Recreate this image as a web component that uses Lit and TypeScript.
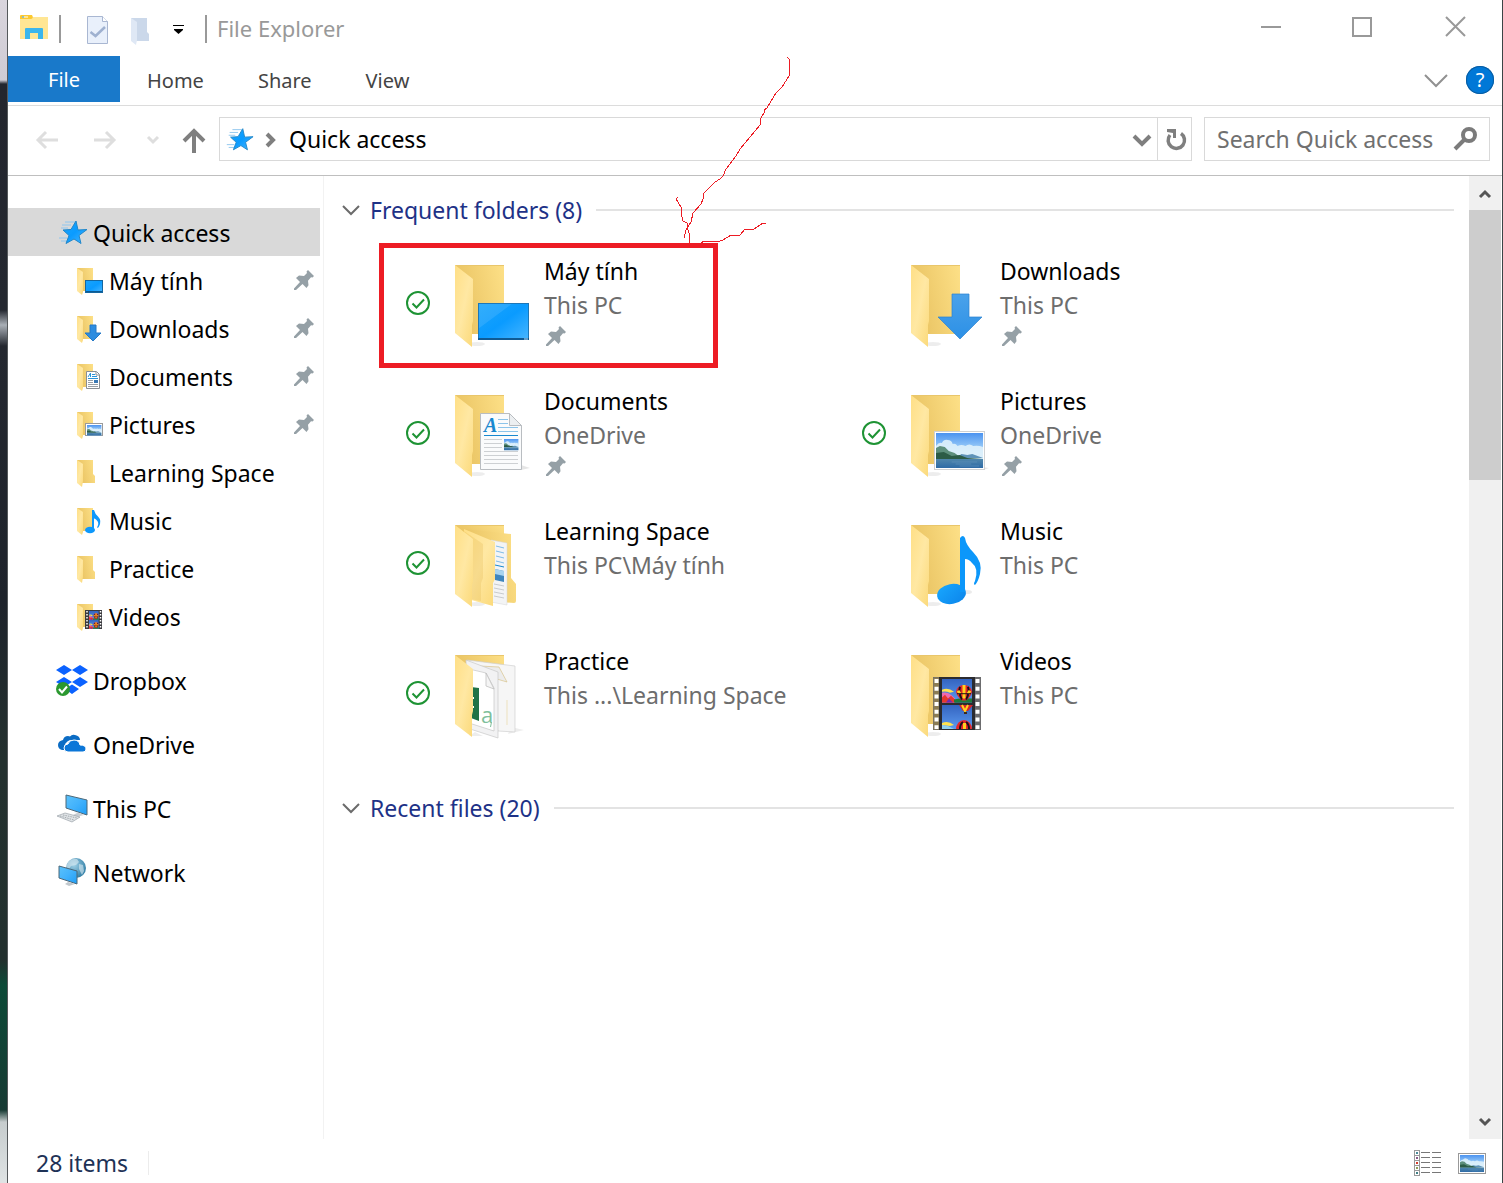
import { LitElement, html, svg, css, nothing, SVGTemplateResult } from "lit";
import { customElement, state } from "lit/decorators.js";
import { classMap } from "lit/directives/class-map.js";

interface Folder {
  name: string;
  place: string;
  art: string;
  pinned: boolean;
  synced: boolean;
  marked?: boolean;
}

interface Place {
  name: string;
  art: string;
  child?: boolean;
  pinned?: boolean;
}

const PLACES: Place[] = [
  { name: "Quick access", art: "star" },
  { name: "Máy tính", art: "desktop", child: true, pinned: true },
  { name: "Downloads", art: "downloads", child: true, pinned: true },
  { name: "Documents", art: "documents", child: true, pinned: true },
  { name: "Pictures", art: "pictures", child: true, pinned: true },
  { name: "Learning Space", art: "plain", child: true },
  { name: "Music", art: "music", child: true },
  { name: "Practice", art: "plain", child: true },
  { name: "Videos", art: "videos", child: true },
  { name: "Dropbox", art: "dropbox" },
  { name: "OneDrive", art: "onedrive" },
  { name: "This PC", art: "pc" },
  { name: "Network", art: "network" },
];

const FOLDERS: Folder[] = [
  { name: "Máy tính", place: "This PC", art: "desktop", pinned: true, synced: true, marked: true },
  { name: "Downloads", place: "This PC", art: "downloads", pinned: true, synced: false },
  { name: "Documents", place: "OneDrive", art: "documents", pinned: true, synced: true },
  { name: "Pictures", place: "OneDrive", art: "pictures", pinned: true, synced: true },
  { name: "Learning Space", place: "This PC\\Máy tính", art: "learning", pinned: false, synced: true },
  { name: "Music", place: "This PC", art: "music", pinned: false, synced: false },
  { name: "Practice", place: "This ...\\Learning Space", art: "practice", pinned: false, synced: true },
  { name: "Videos", place: "This PC", art: "videos", pinned: false, synced: false },
];

/* Landscape photo drawn in a 48 x 35 box. */
const landscape = svg`
  <rect width="48" height="35" fill="url(#sky)"/>
  <path d="M0 13q3-4 6-3q2-4 6-3q4 0 5 4q3-1 5 2q4-2 8 0q4-3 8 0q5-1 10 1v14H0z" fill="#dff1fb" opacity=".9"/>
  <path d="M20 25l6-4 6 1 5-1 11 4z" fill="#5f93b8"/>
  <path d="M0 15l4-2 5 1 4 4 6 2 7 5H0z" fill="#5d8f7c"/>
  <path d="M0 20l8-1 8 4 8-1 8 3 16 1H0z" fill="#2c5c46"/>
  <rect y="26" width="48" height="9" fill="url(#lake)"/>
  <path d="M16 29h26M20 31h16M24 33h20" stroke="#6d9fc6" stroke-width=".8" opacity=".6"/>`;

/* Balloon film frame drawn in a 30 x 24 box. */
const balloonFrame = svg`
  <rect width="30" height="24" fill="url(#film)"/>
  <path d="M0 11q6-3 12 2l-4 1q-4-2-8-1z" fill="#ffe34f"/>
  <path d="M0 14q5-1 9 2l4 4v4H0z" fill="#f06ab0"/>
  <path d="M0 19l3-3 3 4 3-3 4 4v3H0z" fill="#e5382d"/>
  <path d="M4 24l3-4 4 4z" fill="#6f2bb8"/>
  <path d="M12 21q8-2 18-1v4H12z" fill="#1f7a3a"/>
  <path d="M14 13a8 7 0 0 1 16 0q-1 5-6 9h-4q-5-4-6-9z" fill="#e5262a"/>
  <path d="M18 8q-2 6 2 13M26 8q2 6-2 13" stroke="#16121c" stroke-width="2" fill="none"/>
  <path d="M22 6v14M16 12l2 3M28 12l-2 3" stroke="#ffd21f" stroke-width="3"/>
  <path d="M15 15h14" stroke="#1d1417" stroke-width="1"/>`;

const star = svg`
  <path d="M9 6h10M6 9h9M5 12h7M3 22h8M5 25h7" stroke="#8fc6ee" stroke-width="1"/>
  <path d="M20 5l2 9 9-.5-8 6 2 8-7-4.500-8 4.500 3-8-6-5.500 8-.5z" fill="url(#blue)" stroke="#2187c9" stroke-width="1"/>`;

const smallBase = svg`
  <path d="M5 4h16v23H10z" fill="url(#back)"/>
  <path d="M5 4l6 4v20l-1 3-5-4z" fill="url(#flap)"/>`;

const SMALL: Record<string, SVGTemplateResult> = {
  star,
  plain: svg`
    <path d="M5 4h16v14l2 2v7H10z" fill="url(#back)"/>
    <path d="M5 4l6 4v17l-1 6-5-4z" fill="url(#flap)"/>`,
  desktop: svg`${smallBase}<rect x="13.500" y="16.500" width="17" height="12" fill="url(#blue)" stroke="#15669f"/><path d="M14 27.500h16" stroke="#0b5a93"/>`,
  downloads: svg`${smallBase}<path d="M18 13h6v8h5l-8 8-8-8h5z" fill="#2e8de0" stroke="#2579c6"/>`,
  documents: svg`${smallBase}<path d="M14.500 11.500h10l3 3v14h-13z" fill="#fff" stroke="#8a8f94"/><path d="M24 12v3h3" fill="none" stroke="#8a8f94"/>
    <path d="M16 18.500h10M20 14.500h3M20 16.500h5" stroke="#2a94d8"/><path d="M16 17l2.500-4v4" fill="none" stroke="#2a94d8"/><path d="M16 20.500h5M16 22.500h5M16 24.500h10M16 26.500h10" stroke="#9aa0a6"/><rect x="22" y="20" width="4" height="3" fill="#3878b4"/>`,
  pictures: svg`${smallBase}<rect x="13.500" y="15.500" width="17" height="12" fill="#fff" stroke="#9a9a9a"/><g transform="translate(15 17) scale(.3)">${landscape}</g>`,
  music: svg`${smallBase}<ellipse cx="18" cy="26" rx="5" ry="3.200" fill="#0d98fb"/><path d="M20 26V6h2q1 4 4 6.500q4 4 1 10q-1 2-2 1q3-5-1-8-1-1-2-1v11z" fill="#0d98fb"/>`,
  videos: svg`${smallBase}<rect x="13" y="10" width="17" height="19" fill="#3a3a3e"/><g transform="translate(17 11) scale(.32 .36)">${balloonFrame}</g><g transform="translate(17 20) scale(.32 .36)">${balloonFrame}</g>
    <path d="M15 11v18M28.500 11v18" stroke="#fff" stroke-width="1.500" stroke-dasharray="1.500 1.500"/>`,
  dropbox: svg`
    <path d="M8 1l8 5-8 5-8-5zM24 1l8 5-8 5-8-5zM8 13l8 5-8 5-8-5zM24 13l8 5-8 5-8-5zM16 20.500l7 4.500-7 5-7-5z" fill="#0b62ff"/>
    <circle cx="7" cy="25" r="7" fill="#2b982f"/><path d="M3 25l3 3.500 5-6" fill="none" stroke="#fff" stroke-width="2"/>`,
  onedrive: svg`
    <path d="M6 22q-4-1-4-5t5-5q1-4 5-4 1 0 2 .5 2-2.500 5-1.500 5 1 5 5H14q-6 2-6 10z" fill="#0b6cc4"/>
    <path d="M12 24q-4 0-4-4t4-4q1-4 6-4 5 0 6 5 6 0 6 4 0 3-3 3z" fill="#0b76d8" stroke="#fff" stroke-width="1"/>`,
  pc: svg`
    <path d="M10 3l21 5v15L10 16z" fill="url(#screen)" stroke="#4d6879" stroke-width="1"/>
    <path d="M17 20l4 1-4 2 3 2 8-2-5-2z" fill="#c9ced3"/>
    <path d="M1 24l8-3 15 4-8 5z" fill="#dfe3e6" stroke="#9ca4aa" stroke-width=".7"/><path d="M4 24l14 4M7 23l14 3" stroke="#a4abb0" stroke-dasharray="1.500 1"/>`,
  network: svg`
    <circle cx="20" cy="12" r="10" fill="url(#globe)"/>
    <path d="M12 6q4-4 9-3l2 3-3 3-5 1-2 3-3-2zM23 8l4 1 1 6-2 4-3-6z" fill="#dcebf2" opacity=".6"/>
    <path d="M3 10l18 5v13L3 22z" fill="url(#screen)" stroke="#4d6879" stroke-width="1"/><path d="M9 28l3-2 7 2-6 2z" fill="#c0c7cc"/>`,
};

const bigBase = svg`
  <ellipse cx="22" cy="79" rx="8" ry="2" fill="#000" opacity=".07"/>
  <path d="M0 0h49v69H10z" fill="url(#back)"/><path d="M0 .5h49" stroke="#e9c66b"/>
  <path d="M0 0l18 14v42l-1 4v22L0 68z" fill="url(#flap)"/>`;

const BIG: Record<string, SVGTemplateResult> = {
  desktop: svg`${bigBase}
    <rect x="23" y="38" width="51" height="37" fill="url(#blue)"/><path d="M23 75V64l35-26H23z" fill="#fff" opacity=".1"/>
    <rect x="23.500" y="38.500" width="50" height="36" fill="none" stroke="#1d77b8"/><path d="M23 74h51" stroke="#0f5a94" stroke-width="2"/><path d="M69 74h4" stroke="#bfe2fa"/>`,
  downloads: svg`${bigBase}<path d="M41 29h17v23h13L49 74 27 52h14z" fill="url(#arrow)" stroke="#2c82cf" stroke-width=".7"/>`,
  documents: svg`${bigBase}
    <path d="M66 70l9 3-9 2z" fill="#000" opacity=".1"/>
    <path d="M25.500 18.500h29l12 12v44h-41z" fill="#fafbfc" stroke="#b9bdc1"/><path d="M54.500 18.500v12h12z" fill="#eceff1" stroke="#b9bdc1"/>
    <text x="29" y="37" class="letter-a">A</text>
    <path d="M43 24.500h10M43 28.500h10M43 32.500h20M43 36.500h20" stroke="#8cc4ea"/><path d="M29 40.500h34" stroke="#1888cf"/>
    <path d="M29 44.500h18M29 48.500h18M29 52.500h18M29 56.500h34M29 60.500h34M29 64.500h34M29 68.500h34" stroke="#cdd0d3"/>
    <g transform="translate(49 44) scale(.3 .32)">${landscape}</g>`,
  pictures: svg`${bigBase}
    <path d="M70 72l8 1-6 2z" fill="#000" opacity=".1"/>
    <rect x="23.500" y="36.500" width="50" height="38" fill="#fff" stroke="#cfd1d3"/><g transform="translate(25 38) scale(.98 1)">${landscape}</g>`,
  learning: svg`
    <ellipse cx="22" cy="79" rx="8" ry="2" fill="#000" opacity=".07"/>
    <path d="M0 0h49v12H6z" fill="url(#back)"/><path d="M0 .5h49" stroke="#e9c66b"/>
    <path d="M10 4l46 5v44l5 6v17q0 2-2 2l-12-1z" fill="url(#back)"/>
    <path d="M36 15l16 3v62l-16-3z" fill="#f3f4f5" stroke="#d4d4d4" stroke-width=".5"/>
    <path d="M41 21l8 2M41 26l8 2M41 31l8 2M41 36l8 2" stroke="#7fbce8"/><path d="M40 40l9 2" stroke="#1888cf"/>
    <path d="M40 44l9 2v11l-9-2z" fill="#3f86bd"/><path d="M40 44l9 2v5l-9-2z" fill="#a8d4f0"/><path d="M39 59l10 2M39 63l10 2M39 67l10 2M39 71l10 2" stroke="#c8cbce"/>
    <path d="M9 4l31 13v37l-2 4v23L9 73z" fill="url(#flap)"/><path d="M9 6l19 13v34l-2 5v18L9 73z" fill="#d9ac42" opacity=".22"/>
    <path d="M0 0l18 14v42l-1 4v22L0 69z" fill="url(#flap)"/>`,
  music: svg`${bigBase}
    <ellipse cx="56" cy="67" rx="5" ry="2" fill="#000" opacity=".08"/>
    <ellipse cx="40.500" cy="69" rx="14.500" ry="10" transform="rotate(-10 40.500 69)" fill="url(#note)"/>
    <path d="M49 67V13q3-4 5 0 1 7 8 14 10 10 7 22-2 8-5 11-2-1 0-4 4-13-3-18-3-4-7-4v33z" fill="#0c97fa"/>`,
  practice: svg`
    <path d="M0 0h49v20H10z" fill="url(#back)"/><path d="M0 .5h49" stroke="#e9c66b"/>
    <path d="M56 72l13 3-16 4zM20 77l-6 4h14z" fill="#000" opacity=".07"/>
    <path d="M12 5l48 6v66l-17-1z" fill="#f6f6f6" stroke="#d0d0d0" stroke-width=".7"/>
    <path d="M24 11l20 1 8 15-10-3" fill="#ececec" stroke="#d8c48d" stroke-width=".7"/><path d="M52 45v25" stroke="#ead9a8" stroke-width=".7"/>
    <path d="M11 5l32 12v66L12 73z" fill="#f2f2f3" stroke="#c9c9c9" stroke-width=".7"/>
    <path d="M14 14l17 4 8 15v43L14 68z" fill="#fff" stroke="#c6c6c6" stroke-width=".7"/><path d="M31 18v13l8 3z" fill="#f5f5f5" stroke="#b9b9b9" stroke-width=".7"/>
    <path d="M16 32l8 1v33l-8-3z" fill="#1f7246"/><path d="M16 43h3M16 52h3" stroke="#fff" stroke-width="2"/>
    <text x="26" y="68" class="letter-small">a</text><path d="M36.500 67l-1 5" stroke="#7fbf9c"/>
    <path d="M0 0l18 14v42l-1 4v22L0 69z" fill="url(#flap)"/>`,
  videos: svg`${bigBase}
    <rect x="22" y="22" width="48" height="53" fill="#6c6c6e"/><rect x="22.500" y="22.500" width="6" height="52" fill="#8b7c55"/><rect x="28" y="22" width="36" height="53" fill="#2b2b2f"/>
    <g transform="translate(31 24) scale(1 .98)">${balloonFrame}</g>
    <rect x="31" y="50" width="30" height="24" fill="url(#film)"/><path d="M48 50h14l-5 6h-5z" fill="#d9262a"/><path d="M51 50l3 6 3-6" stroke="#ffd21f" stroke-width="2" fill="none"/><rect x="53" y="57" width="3" height="2" fill="#3c2a1c"/>
    <path d="M31 68q6-3 12 2l-4 1-8-1z" fill="#ffe34f"/><path d="M31 70l6 1 6 3H31z" fill="#8fd0ef"/>
    <path d="M45 74a8 9 0 0 1 16 0z" fill="#e5262a"/><path d="M49 74q0-5 3-7M58 74q0-5-3-7" stroke="#17121c" stroke-width="2" fill="none"/><path d="M53.500 74v-6" stroke="#ffd21f" stroke-width="3"/>
    <path d="M25.500 24v50M66.500 24v50" stroke="#fff" stroke-width="4" stroke-dasharray="4 3.700"/>`,
};

const pin = html`<svg class="pin" viewBox="0 0 20 20" aria-hidden="true">
  <path d="M14 0l6 6-1.500 1.500-1.500-.2-3 3.500.5 4.500-2 2.700-4-4-6.500 6H0v-1.500l6-6.500-4-4L5 5.500l5 .5 3-3-.5-1.500z" fill="#95a0a6"/></svg>`;

@customElement("app-root")
export class AppRoot extends LitElement {
  @state() private selected = "Quick access";

  static styles = css`
    :host {
      display: grid;
      grid-template-columns: 8px minmax(0, 1fr) 1px;
      min-height: 100vh;
      background: #3b4446;
      color: #000;
      font: 23px/32px "Noto Sans", "Open Sans", sans-serif;
    }
    * { box-sizing: border-box; }
    button, input { font: inherit; color: inherit; border: 0; padding: 0; margin: 0; background: none; }
    button { display: flex; align-items: center; justify-content: center; }
    h2, p { margin: 0; font: inherit; }
    svg { display: block; flex: none; overflow: visible; }
    .defs { position: absolute; width: 0; height: 0; }
    .backdrop {
      border-right: 1px solid #55595b;
      background: linear-gradient(#d9d5dd 0, #cfccd4 80px, #23262e 84px, #242830 310px, #a9afb6 325px, #242830 346px,
        #1e232b 600px, #24312f 760px, #22302e 960px, #0c4a37 985px, #173a33 1110px, #c6cccd 1122px, #dfe3e4 1183px);
    }
    .window { display: flex; flex-direction: column; min-width: 0; background: #fff; }
    .titlebar { display: flex; align-items: center; height: 56px; padding-left: 12px; color: #999; }
    .quick { display: flex; align-items: center; flex: 1; }
    .rule { width: 2px; height: 28px; background: #999; margin: 2px 0 0 11px; }
    .check { margin: 4px 0 0 26px; }
    .new { margin: 6px 0 0 23px; }
    .more { margin: 2px 0 0 24px; }
    .title { padding-left: 10px; font-size: 22px; }
    .rule.second { margin-left: 21px; }
    .caption { width: 92px; height: 56px; }
    .tabs { display: flex; align-items: flex-start; height: 50px; border-bottom: 1px solid #dcdcdc; color: #444; font-size: 20px; }
    .tab { height: 50px; padding: 0 27px; }
    .tab.file { width: 112px; height: 48px; height: 46px; padding-top: 2px; background: #1979ca; color: #fff; }
    .spacer { flex: 1; }
    .expand { width: 44px; height: 48px; }
    .help { width: 28px; height: 28px; margin: 10px 8px 0; border-radius: 50%; background: #0078d7; box-shadow: inset 0 0 0 1px #0a5ca0; color: #fff; }
    .bar { display: flex; align-items: center; height: 70px; padding: 0 12px 4px 10px; border-bottom: 1px solid #bfbfbf; }
    .go { width: 58px; height: 44px; padding-top: 2px; }
    .go.small { width: 38px; }
    .go.up { width: 44px; margin-right: 3px; }
    .address, .search { display: flex; align-items: center; height: 44px; border: 1px solid #d9d9d9; }
    .address { flex: 1; min-width: 0; padding-left: 4px; }
    .arrow { margin-left: 11px; }
    .crumb { padding: 1px 0 0 15px; flex: 1; justify-content: flex-start; }
    .drop { width: 32px; height: 42px; }
    .refresh { width: 34px; height: 42px; border-left: 1px solid #d9d9d9; }
    .search { width: 286px; margin-left: 12px; padding: 1px 12px 0; }
    .search input { flex: 1; min-width: 0; outline: none; }
    .search input::placeholder { color: #707070; opacity: 1; }
    .body { display: flex; flex: 1; min-height: 0; }
    .nav { width: 316px; padding: 32px 3px 0 0; border-right: 1px solid #f2f2f2; }
    .place { width: 100%; height: 48px; padding: 0 6px 0 48px; gap: 5px; justify-content: flex-start; }
    .place.child { padding-left: 64px; }
    .place.root + .place.root, .place.child + .place.root { margin-top: 16px; }
    .place.selected { background: #d9d9d9; }
    .label { flex: 1; text-align: left; padding-top: 2px; white-space: nowrap; }
    .pin { width: 20px; height: 20px; }
    .content { flex: 1; min-width: 0; padding: 16px 15px 0 19px; }
    .group { display: flex; align-items: center; width: 100%; height: 36px; color: #1e3287; }
    .group::after { content: ""; flex: 1; height: 2px; margin-left: 14px; background: #e3e3e3; }
    .group h2 { margin-left: 11px; }
    .tiles { display: grid; grid-template-columns: repeat(auto-fill, 456px); padding: 10px 0 32px 36px; }
    .tile { position: relative; display: flex; height: 130px; padding-left: 27px; }
    .sync { width: 24px; padding-top: 53px; }
    .art { padding: 27px 0 0 25px; width: 114px; }
    .info { padding-top: 16px; line-height: 34px; white-space: nowrap; }
    .info .pin { margin: 4px 0 0 2px; }
    .where { color: #6d6d6d; }
    .mark { position: absolute; left: 0; top: 5px; width: 339px; height: 125px; border: 5px solid #ed1c24; pointer-events: none; }
    .ink { position: absolute; left: 296px; top: -182px; pointer-events: none; }
    .scroll { display: flex; flex-direction: column; width: 32px; margin-right: 1px; background: #f0f0f0; }
    .scroll button { width: 32px; height: 34px; }
    .thumb { height: 270px; background: #cdcdcd; }
    .status { display: flex; align-items: center; height: 44px; padding: 4px 16px 0 28px; color: #1e3256; }
    .count { padding-right: 20px; border-right: 1px solid #ececec; line-height: 24px; }
    .view { margin-left: 16px; }
    .letter-a { font: italic bold 20px "Liberation Serif", serif; fill: #1888cf; }
    .letter-small { font: 22px "Open Sans", sans-serif; fill: #7fbf9c; }
  `;

  private defs() {
    return html`<svg class="defs" aria-hidden="true"><defs>
      <linearGradient id="back" x1="0" y1=".3" x2="1" y2="0"><stop offset="0" stop-color="#e9c362"/><stop offset="1" stop-color="#fde087"/></linearGradient>
      <linearGradient id="flap" x1="0" y1="0" x2="1" y2="1"><stop offset="0" stop-color="#ffdf86"/><stop offset=".5" stop-color="#ffe8a3"/><stop offset="1" stop-color="#fbd979"/></linearGradient>
      <linearGradient id="blue" x1="0" y1="0" x2="1" y2="1"><stop offset="0" stop-color="#1ca5fb"/><stop offset=".5" stop-color="#0a9bff"/><stop offset="1" stop-color="#49b6ff"/></linearGradient>
      <linearGradient id="screen" x1="0" y1="0" x2="1" y2="1"><stop offset="0" stop-color="#5cc2fb"/><stop offset=".5" stop-color="#42b2fc"/><stop offset="1" stop-color="#1f9df5"/></linearGradient>
      <linearGradient id="note" x1="0" y1="0" x2="1" y2="1"><stop offset="0" stop-color="#18a8ff"/><stop offset="1" stop-color="#0c84ea"/></linearGradient>
      <linearGradient id="arrow" x1="0" y1="0" x2="0" y2="1"><stop offset="0" stop-color="#4aa2ea"/><stop offset="1" stop-color="#2c90e6"/></linearGradient>
      <linearGradient id="sky" x1="0" y1="0" x2="0" y2="1"><stop offset="0" stop-color="#4b93f0"/><stop offset=".6" stop-color="#b9e2fb"/></linearGradient>
      <linearGradient id="lake" x1="0" y1="0" x2="0" y2="1"><stop offset="0" stop-color="#4f86ac"/><stop offset="1" stop-color="#2e6ba6"/></linearGradient>
      <linearGradient id="film" x1="0" y1="0" x2="0" y2="1"><stop offset="0" stop-color="#3464c0"/><stop offset="1" stop-color="#5b9af0"/></linearGradient>
      <radialGradient id="globe" cx=".4" cy=".35" r=".7"><stop offset="0" stop-color="#9fd0e6"/><stop offset="1" stop-color="#2d7ba3"/></radialGradient>
    </defs></svg>`;
  }

  private titlebar() {
    return html`<header class="titlebar">
      <div class="quick">
        <svg width="28" height="24" viewBox="0 0 28 24" aria-hidden="true"><path d="M0 1h28v22H0z" fill="#ffe694"/><path d="M0 0q0-1 1-1h11q2 3-1 4H0z" fill="#fcc92f"/><path d="M2 1h6" stroke="#fff"/><path d="M2 1h2" stroke="#2f9be0"/><path d="M5 23V13q0-1 1-1h16q1 0 1 1v10h-5v-6h-8v6z" fill="#3cb6ec"/></svg>
        <span class="rule"></span>
        <button class="check" aria-label="Properties"><svg width="21" height="28" viewBox="0 0 21 28"><path d="M.5.5h15l5 5v22H.5z" fill="#e9f0fb" stroke="#a9b7d2"/><path d="M15.500.5v5h5" fill="#fff" stroke="#a9b7d2"/><path d="M3.500 16l5 4L18 11" fill="none" stroke="#9fb1d0" stroke-width="2.500"/></svg></button>
        <button class="new" aria-label="New folder"><svg width="18" height="27" viewBox="0 0 18 27"><path d="M0 0h16v14l2 2v7H5z" fill="#cbd8ea"/><path d="M0 0l6 4v18l-1 5-5-4z" fill="#dfe8f5"/></svg></button>
        <button class="more" aria-label="Customize toolbar"><svg width="11" height="9" viewBox="0 0 11 9"><path d="M0 0h11v1H0zM1 4h9v1L5.500 9 1 5z" fill="#000"/></svg></button>
        <span class="rule second"></span>
        <span class="title">File Explorer</span>
      </div>
      <button class="caption" aria-label="Minimize"><svg width="20" height="20" viewBox="0 0 20 20"><path d="M-1 9h20" stroke="#999" stroke-width="2"/></svg></button>
      <button class="caption" aria-label="Maximize"><svg width="20" height="20" viewBox="0 0 20 20"><path d="M-1 0h18v18H-1z" fill="none" stroke="#999" stroke-width="2"/></svg></button>
      <button class="caption" aria-label="Close"><svg width="20" height="20" viewBox="0 0 20 20"><path d="M0-1l19 19M19-1L0 18" stroke="#999" stroke-width="2"/></svg></button>
    </header>`;
  }

  private tabs() {
    return html`<nav class="tabs">
      <button class="tab file">File</button><button class="tab">Home</button><button class="tab">Share</button><button class="tab">View</button>
      <span class="spacer"></span>
      <button class="expand" aria-label="Expand the ribbon"><svg width="22" height="12" viewBox="0 0 22 12"><path d="M0 1l11 11L22 1" fill="none" stroke="#919191" stroke-width="2"/></svg></button>
      <button class="help" aria-label="Help">?</button>
    </nav>`;
  }

  private bar() {
    return html`<div class="bar">
      <button class="go" aria-label="Back"><svg width="22" height="18" viewBox="0 0 22 18"><path d="M22 9H2M10 1L2 9l8 8" fill="none" stroke="#dedede" stroke-width="3"/></svg></button>
      <button class="go" aria-label="Forward"><svg width="22" height="18" viewBox="0 0 22 18"><path d="M0 9h20M12 1l8 8-8 8" fill="none" stroke="#dedede" stroke-width="3"/></svg></button>
      <button class="go small" aria-label="Recent locations"><svg width="12" height="8" viewBox="0 0 12 8"><path d="M1 1l5 5 5-5" fill="none" stroke="#dedede" stroke-width="3"/></svg></button>
      <button class="go up" aria-label="Up"><svg width="22" height="24" viewBox="0 0 22 24"><path d="M11 25V3M1 13L11 3l10 10" fill="none" stroke="#7f7f7f" stroke-width="4"/></svg></button>
      <div class="address">
        <svg width="30" height="30" viewBox="0 0 32 32" aria-hidden="true">${star}</svg>
        <svg class="arrow" width="9" height="14" viewBox="0 0 9 14" aria-hidden="true"><path d="M2 2l6 6-6 6" fill="none" stroke="#7f7f7f" stroke-width="4"/></svg>
        <button class="crumb">Quick access</button>
        <button class="drop" aria-label="Previous locations"><svg width="18" height="12" viewBox="0 0 18 12"><path d="M2 3l8 8 8-8" fill="none" stroke="#7f7f7f" stroke-width="4"/></svg></button>
        <button class="refresh" aria-label="Refresh"><svg width="20" height="22" viewBox="0 0 20 22"><path d="M16 5.500A8.200 8.200 0 1 1 5 7" fill="none" stroke="#7f7f7f" stroke-width="3.500"/><path d="M2 1h9v9H8V5L2 4z" fill="#7f7f7f"/></svg></button>
      </div>
      <label class="search">
        <input type="search" placeholder="Search Quick access" aria-label="Search Quick access" />
        <svg width="24" height="24" viewBox="0 0 24 24" aria-hidden="true"><circle cx="16" cy="8" r="6" fill="none" stroke="#7b7b7b" stroke-width="4"/><path d="M12 12L2 22" stroke="#7b7b7b" stroke-width="4"/></svg>
      </label>
    </div>`;
  }

  private place(p: Place) {
    const classes = { place: true, child: !!p.child, root: !p.child, selected: this.selected === p.name };
    return html`<button class=${classMap(classes)} @click=${() => (this.selected = p.name)}>
      <svg width="32" height="32" viewBox="0 0 32 32" aria-hidden="true">${SMALL[p.art]}</svg>
      <span class="label">${p.name}</span>${p.pinned ? pin : nothing}
    </button>`;
  }

  private tile(f: Folder) {
    return html`<article class="tile">
      <div class="sync">${f.synced
        ? html`<svg width="24" height="24" viewBox="0 0 24 24" role="img" aria-label="Available"><circle cx="12" cy="12" r="11" fill="none" stroke="#1e9334" stroke-width="2"/><path d="M6.500 12.500l4 4 7.500-8" fill="none" stroke="#1e9334" stroke-width="2"/></svg>`
        : nothing}</div>
      <div class="art"><svg width="80" height="84" viewBox="0 0 80 84" aria-hidden="true">${BIG[f.art]}</svg></div>
      <div class="info"><p>${f.name}</p><p class="where">${f.place}</p>${f.pinned ? pin : nothing}</div>
      ${f.marked ? this.marking() : nothing}
    </article>`;
  }

  private marking() {
    return html`<div class="mark"></div>
      <svg class="ink" width="92" height="188" viewBox="675 56 92 188" aria-hidden="true">
        <g fill="none" stroke="#ed1c24" stroke-width="1" shape-rendering="crispEdges">
          <path d="M787 57l2 2v17l-7 11-6 6-6 10-3 5-3 2v3l-3 5-1 7-20 24-4 7-10 13-3 7-3 3-5 3-11 11-1 6-2 5-8 9-2 9-5 8-2 8"/>
          <path d="M678 197l-2 2 5 8 1 10 1 4 4 2 1 7 1 3v10"/>
          <path d="M766 223h-3l-9 6h-9l-5 6h-9l-8 5-3 1h-16l-3 2"/>
        </g></svg>`;
  }

  private group(title: string) {
    return html`<button class="group" aria-expanded="true">
      <svg width="16" height="10" viewBox="0 0 16 10"><path d="M0 1l8 8 8-8" fill="none" stroke="#6b6b6b" stroke-width="2"/></svg>
      <h2>${title}</h2>
    </button>`;
  }

  render() {
    return html`${this.defs()}
      <div class="backdrop"></div>
      <div class="window">
        ${this.titlebar()}${this.tabs()}${this.bar()}
        <div class="body">
          <nav class="nav" aria-label="Places">${PLACES.map((p) => this.place(p))}</nav>
          <main class="content">
            ${this.group("Frequent folders (8)")}
            <div class="tiles">${FOLDERS.map((f) => this.tile(f))}</div>
            ${this.group("Recent files (20)")}
          </main>
          <div class="scroll">
            <button aria-label="Scroll up"><svg width="12" height="8" viewBox="0 0 12 8"><path d="M1 8l5-5 5 5" fill="none" stroke="#555" stroke-width="3"/></svg></button>
            <div class="thumb"></div><span class="spacer"></span>
            <button aria-label="Scroll down"><svg width="12" height="8" viewBox="0 0 12 8"><path d="M1 1l5 5 5-5" fill="none" stroke="#555" stroke-width="3"/></svg></button>
          </div>
        </div>
        <footer class="status">
          <span class="count">28 items</span><span class="spacer"></span>
          <button class="view" aria-label="Details view"><svg width="28" height="26" viewBox="0 0 28 26">
            ${[0, 5, 10, 15, 20].map((y, i) => svg`<rect x=".5" y=${y + 0.5} width="5" height="5" fill="#fff" stroke="#999"/><rect x="2" y=${y + 2} width="2" height="2" fill=${["#4a8a9a", "#8a5a8a", "#d23c2c", "#8fa05a", "#3f7f86"][i]}/><path d=${`M7 ${y + 2.5}h9M18 ${y + 2.5}h9`} stroke="#777"/>`)}
          </svg></button>
          <button class="view" aria-label="Large icons view"><svg width="28" height="21" viewBox="0 0 28 21"><rect x=".5" y=".5" width="27" height="20" fill="#fff" stroke="#999"/><g transform="translate(2 2) scale(.5 .486)">${landscape}</g></svg></button>
        </footer>
      </div>
      <div class="edge"></div>`;
  }
}
